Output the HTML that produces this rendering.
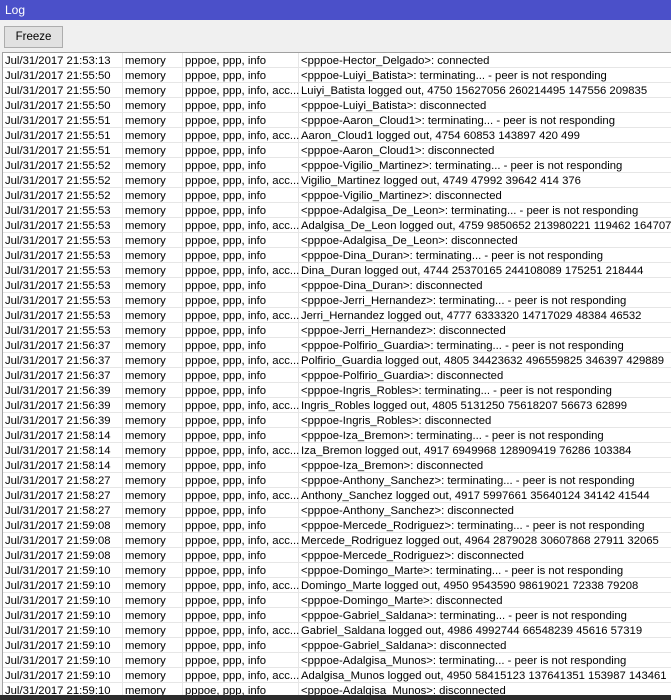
<!DOCTYPE html>
<html><head><style>
body{margin:0;width:671px;height:700px;overflow:hidden;background:#f0f0f0;font-family:"Liberation Sans",sans-serif;font-size:11.3px;position:relative;color:#000}
#t{position:absolute;left:0;top:0;width:671px;height:20px;background:#4b50c9;color:#fff;font-size:12px;line-height:20px;padding-left:5px;box-sizing:border-box}
#b{position:absolute;left:4px;top:26px;width:59px;height:22px;border:1px solid #adadad;background:#e1e1e1;box-sizing:border-box;text-align:center;line-height:20px;font-size:11.5px}
#g{position:absolute;left:2px;top:52px;width:669px;height:643px;background:#fff;border-top:1px solid #a0a0a0;border-left:1px solid #a0a0a0;overflow:hidden}
.r{height:14px;border-bottom:1px solid #e6e6e6;position:relative;white-space:nowrap;line-height:15px}
.r span{position:absolute;top:1px}
.r span:nth-child(1){left:2px}.r span:nth-child(2){left:122px}.r span:nth-child(3){left:182px}.r span:nth-child(4){left:298px}
.v{position:absolute;top:0;bottom:0;width:1px;background:#e6e6e6}
#f{position:absolute;left:0;top:695px;width:671px;height:5px;background:#2d2d2d}
</style></head><body>
<div id="t">Log</div>
<div id="b">Freeze</div>
<div id="g">
<div class="v" style="left:119px"></div><div class="v" style="left:179px"></div><div class="v" style="left:295px"></div>
<div class="r"><span>Jul/31/2017 21:53:13</span><span>memory</span><span>pppoe, ppp, info</span><span>&lt;pppoe-Hector_Delgado&gt;: connected</span></div>
<div class="r"><span>Jul/31/2017 21:55:50</span><span>memory</span><span>pppoe, ppp, info</span><span>&lt;pppoe-Luiyi_Batista&gt;: terminating... - peer is not responding</span></div>
<div class="r"><span>Jul/31/2017 21:55:50</span><span>memory</span><span>pppoe, ppp, info, acc...</span><span>Luiyi_Batista logged out, 4750 15627056 260214495 147556 209835</span></div>
<div class="r"><span>Jul/31/2017 21:55:50</span><span>memory</span><span>pppoe, ppp, info</span><span>&lt;pppoe-Luiyi_Batista&gt;: disconnected</span></div>
<div class="r"><span>Jul/31/2017 21:55:51</span><span>memory</span><span>pppoe, ppp, info</span><span>&lt;pppoe-Aaron_Cloud1&gt;: terminating... - peer is not responding</span></div>
<div class="r"><span>Jul/31/2017 21:55:51</span><span>memory</span><span>pppoe, ppp, info, acc...</span><span>Aaron_Cloud1 logged out, 4754 60853 143897 420 499</span></div>
<div class="r"><span>Jul/31/2017 21:55:51</span><span>memory</span><span>pppoe, ppp, info</span><span>&lt;pppoe-Aaron_Cloud1&gt;: disconnected</span></div>
<div class="r"><span>Jul/31/2017 21:55:52</span><span>memory</span><span>pppoe, ppp, info</span><span>&lt;pppoe-Vigilio_Martinez&gt;: terminating... - peer is not responding</span></div>
<div class="r"><span>Jul/31/2017 21:55:52</span><span>memory</span><span>pppoe, ppp, info, acc...</span><span>Vigilio_Martinez logged out, 4749 47992 39642 414 376</span></div>
<div class="r"><span>Jul/31/2017 21:55:52</span><span>memory</span><span>pppoe, ppp, info</span><span>&lt;pppoe-Vigilio_Martinez&gt;: disconnected</span></div>
<div class="r"><span>Jul/31/2017 21:55:53</span><span>memory</span><span>pppoe, ppp, info</span><span>&lt;pppoe-Adalgisa_De_Leon&gt;: terminating... - peer is not responding</span></div>
<div class="r"><span>Jul/31/2017 21:55:53</span><span>memory</span><span>pppoe, ppp, info, acc...</span><span>Adalgisa_De_Leon logged out, 4759 9850652 213980221 119462 164707</span></div>
<div class="r"><span>Jul/31/2017 21:55:53</span><span>memory</span><span>pppoe, ppp, info</span><span>&lt;pppoe-Adalgisa_De_Leon&gt;: disconnected</span></div>
<div class="r"><span>Jul/31/2017 21:55:53</span><span>memory</span><span>pppoe, ppp, info</span><span>&lt;pppoe-Dina_Duran&gt;: terminating... - peer is not responding</span></div>
<div class="r"><span>Jul/31/2017 21:55:53</span><span>memory</span><span>pppoe, ppp, info, acc...</span><span>Dina_Duran logged out, 4744 25370165 244108089 175251 218444</span></div>
<div class="r"><span>Jul/31/2017 21:55:53</span><span>memory</span><span>pppoe, ppp, info</span><span>&lt;pppoe-Dina_Duran&gt;: disconnected</span></div>
<div class="r"><span>Jul/31/2017 21:55:53</span><span>memory</span><span>pppoe, ppp, info</span><span>&lt;pppoe-Jerri_Hernandez&gt;: terminating... - peer is not responding</span></div>
<div class="r"><span>Jul/31/2017 21:55:53</span><span>memory</span><span>pppoe, ppp, info, acc...</span><span>Jerri_Hernandez logged out, 4777 6333320 14717029 48384 46532</span></div>
<div class="r"><span>Jul/31/2017 21:55:53</span><span>memory</span><span>pppoe, ppp, info</span><span>&lt;pppoe-Jerri_Hernandez&gt;: disconnected</span></div>
<div class="r"><span>Jul/31/2017 21:56:37</span><span>memory</span><span>pppoe, ppp, info</span><span>&lt;pppoe-Polfirio_Guardia&gt;: terminating... - peer is not responding</span></div>
<div class="r"><span>Jul/31/2017 21:56:37</span><span>memory</span><span>pppoe, ppp, info, acc...</span><span>Polfirio_Guardia logged out, 4805 34423632 496559825 346397 429889</span></div>
<div class="r"><span>Jul/31/2017 21:56:37</span><span>memory</span><span>pppoe, ppp, info</span><span>&lt;pppoe-Polfirio_Guardia&gt;: disconnected</span></div>
<div class="r"><span>Jul/31/2017 21:56:39</span><span>memory</span><span>pppoe, ppp, info</span><span>&lt;pppoe-Ingris_Robles&gt;: terminating... - peer is not responding</span></div>
<div class="r"><span>Jul/31/2017 21:56:39</span><span>memory</span><span>pppoe, ppp, info, acc...</span><span>Ingris_Robles logged out, 4805 5131250 75618207 56673 62899</span></div>
<div class="r"><span>Jul/31/2017 21:56:39</span><span>memory</span><span>pppoe, ppp, info</span><span>&lt;pppoe-Ingris_Robles&gt;: disconnected</span></div>
<div class="r"><span>Jul/31/2017 21:58:14</span><span>memory</span><span>pppoe, ppp, info</span><span>&lt;pppoe-Iza_Bremon&gt;: terminating... - peer is not responding</span></div>
<div class="r"><span>Jul/31/2017 21:58:14</span><span>memory</span><span>pppoe, ppp, info, acc...</span><span>Iza_Bremon logged out, 4917 6949968 128909419 76286 103384</span></div>
<div class="r"><span>Jul/31/2017 21:58:14</span><span>memory</span><span>pppoe, ppp, info</span><span>&lt;pppoe-Iza_Bremon&gt;: disconnected</span></div>
<div class="r"><span>Jul/31/2017 21:58:27</span><span>memory</span><span>pppoe, ppp, info</span><span>&lt;pppoe-Anthony_Sanchez&gt;: terminating... - peer is not responding</span></div>
<div class="r"><span>Jul/31/2017 21:58:27</span><span>memory</span><span>pppoe, ppp, info, acc...</span><span>Anthony_Sanchez logged out, 4917 5997661 35640124 34142 41544</span></div>
<div class="r"><span>Jul/31/2017 21:58:27</span><span>memory</span><span>pppoe, ppp, info</span><span>&lt;pppoe-Anthony_Sanchez&gt;: disconnected</span></div>
<div class="r"><span>Jul/31/2017 21:59:08</span><span>memory</span><span>pppoe, ppp, info</span><span>&lt;pppoe-Mercede_Rodriguez&gt;: terminating... - peer is not responding</span></div>
<div class="r"><span>Jul/31/2017 21:59:08</span><span>memory</span><span>pppoe, ppp, info, acc...</span><span>Mercede_Rodriguez logged out, 4964 2879028 30607868 27911 32065</span></div>
<div class="r"><span>Jul/31/2017 21:59:08</span><span>memory</span><span>pppoe, ppp, info</span><span>&lt;pppoe-Mercede_Rodriguez&gt;: disconnected</span></div>
<div class="r"><span>Jul/31/2017 21:59:10</span><span>memory</span><span>pppoe, ppp, info</span><span>&lt;pppoe-Domingo_Marte&gt;: terminating... - peer is not responding</span></div>
<div class="r"><span>Jul/31/2017 21:59:10</span><span>memory</span><span>pppoe, ppp, info, acc...</span><span>Domingo_Marte logged out, 4950 9543590 98619021 72338 79208</span></div>
<div class="r"><span>Jul/31/2017 21:59:10</span><span>memory</span><span>pppoe, ppp, info</span><span>&lt;pppoe-Domingo_Marte&gt;: disconnected</span></div>
<div class="r"><span>Jul/31/2017 21:59:10</span><span>memory</span><span>pppoe, ppp, info</span><span>&lt;pppoe-Gabriel_Saldana&gt;: terminating... - peer is not responding</span></div>
<div class="r"><span>Jul/31/2017 21:59:10</span><span>memory</span><span>pppoe, ppp, info, acc...</span><span>Gabriel_Saldana logged out, 4986 4992744 66548239 45616 57319</span></div>
<div class="r"><span>Jul/31/2017 21:59:10</span><span>memory</span><span>pppoe, ppp, info</span><span>&lt;pppoe-Gabriel_Saldana&gt;: disconnected</span></div>
<div class="r"><span>Jul/31/2017 21:59:10</span><span>memory</span><span>pppoe, ppp, info</span><span>&lt;pppoe-Adalgisa_Munos&gt;: terminating... - peer is not responding</span></div>
<div class="r"><span>Jul/31/2017 21:59:10</span><span>memory</span><span>pppoe, ppp, info, acc...</span><span>Adalgisa_Munos logged out, 4950 58415123 137641351 153987 143461</span></div>
<div class="r"><span>Jul/31/2017 21:59:10</span><span>memory</span><span>pppoe, ppp, info</span><span>&lt;pppoe-Adalgisa_Munos&gt;: disconnected</span></div>
</div>
<div id="f"></div>
</body></html>
